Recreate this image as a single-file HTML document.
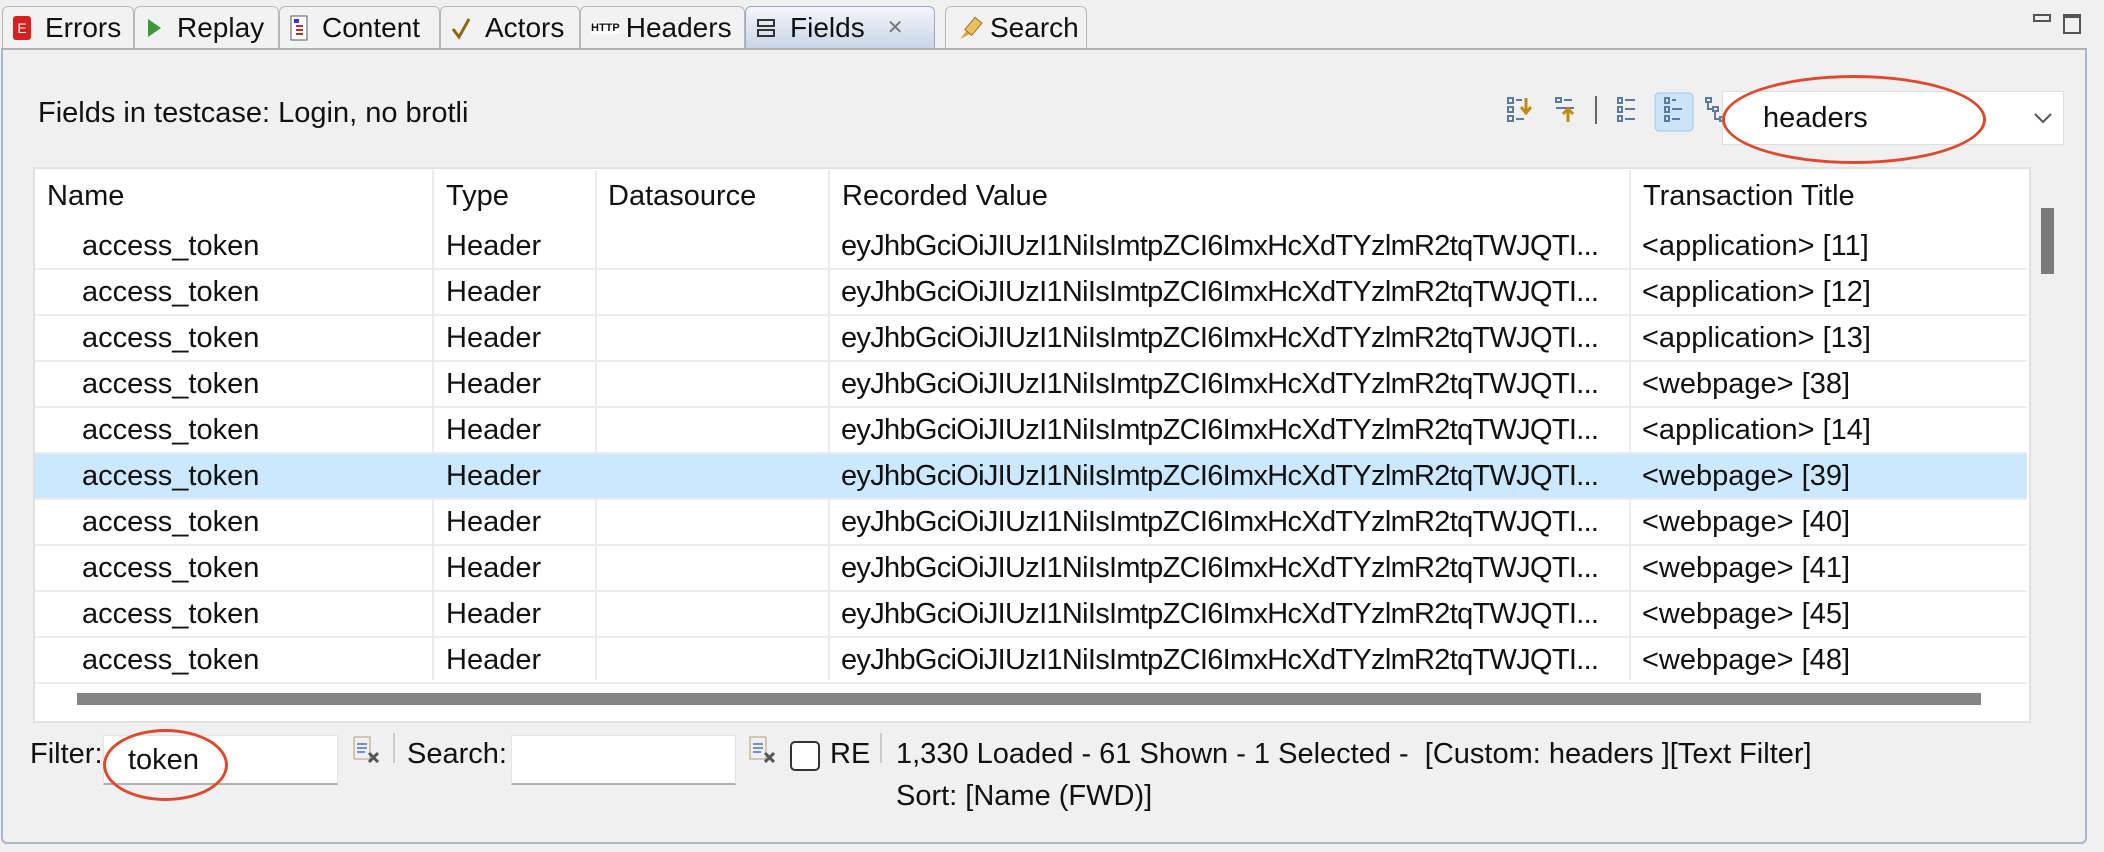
<!DOCTYPE html>
<html><head><meta charset="utf-8"><style>
*{margin:0;padding:0;box-sizing:border-box}
body{width:2104px;height:852px;background:#f0f0f0;font-family:"Liberation Sans",sans-serif;font-size:29px;color:#111;position:relative;overflow:hidden}
.a{position:absolute;white-space:nowrap}
.tab{position:absolute;top:6px;height:42px;border:1px solid #b8b8b8;border-bottom:none;border-radius:6px 6px 0 0;background:#f2f2f2;display:flex;align-items:center;padding-left:10px;gap:14px;font-size:28px}
.row{position:absolute;left:35px;width:1992px;height:46px;border-bottom:2px solid #ececec}
.row span{position:absolute;top:6px;white-space:nowrap}
.vl{position:absolute;top:170px;width:2px;height:510px;background:#ececec}
.inp{position:absolute;background:#fff;border:1px solid #e4e4e4;border-bottom:2px solid #b0b0b0}
.ell{position:absolute;border:3px solid #e2472b;border-radius:50%}
.ic{position:absolute}
</style></head><body>
<div class="tab" style="left:2px;width:132px"><span style="display:inline-block;width:18px;height:24px;background:#d62020;color:#fff;font-size:14px;text-align:center;line-height:24px;border-radius:3px">E</span>Errors</div>
<div class="tab" style="left:134px;width:145px"><svg width="18" height="22"><path d="M3 2L16 11L3 20Z" fill="#3a9a3a"/></svg>Replay</div>
<div class="tab" style="left:279px;width:161px"><svg width="18" height="26"><rect x="1" y="1" width="16" height="24" fill="#fff" stroke="#556"/><rect x="4" y="4" width="5" height="4" fill="#33f"/><path d="M6 11h7M6 15h7M6 19h7" stroke="#a33" stroke-width="2"/></svg>Content</div>
<div class="tab" style="left:440px;width:140px"><svg width="20" height="24"><path d="M2 13L8 21L18 3" fill="none" stroke="#8a6a10" stroke-width="3"/></svg>Actors</div>
<div class="tab" style="left:580px;width:165px;gap:6px"><span style="font-size:11px;font-weight:bold;background:#fff">HTTP</span>Headers</div>
<div class="tab" style="left:745px;width:190px;background:linear-gradient(#f4f6fa,#c8d6e8);border-color:#9aaac0"><svg width="20" height="22"><rect x="2" y="3" width="16" height="6" fill="none" stroke="#333" stroke-width="2"/><rect x="2" y="13" width="16" height="6" fill="none" stroke="#333" stroke-width="2"/></svg>Fields<span style="color:#777;font-size:20px;margin-left:8px">✕</span></div>
<div class="tab" style="left:945px;width:142px;gap:6px"><svg width="28" height="26"><path d="M4 24L12 14L16 18Z" fill="#d9a441"/><rect x="13" y="3" width="9" height="16" transform="rotate(40 17 11)" fill="#e8c060" stroke="#a07020"/></svg>Search</div>
<div class="a" style="left:2033px;top:14px;width:18px;height:8px;border:2px solid #555"></div>
<div class="a" style="left:2063px;top:14px;width:18px;height:20px;border:2px solid #555;border-top-width:4px"></div>
<div class="a" style="left:1px;top:48px;width:2086px;height:796px;border:2px solid #a8a8a8;border-color:#b0b0b0 #a8b8cc #a8b8cc #a8b8cc;border-radius:0 0 6px 6px"></div>
<div class="a" style="left:38px;top:97px">Fields in testcase: Login, no brotli</div>
<svg class="ic" style="left:1500px;top:92px" width="200" height="40">
<g stroke="#5a7aa0" stroke-width="2" fill="none"><rect x="8" y="6" width="5" height="5"/><rect x="8" y="15" width="5" height="5"/><rect x="8" y="24" width="5" height="5"/><path d="M16 8h6M16 27h8"/></g>
<path d="M26 6v14M21 15l5 6l5-6" stroke="#c08a10" stroke-width="3" fill="none"/>
<g stroke="#5a7aa0" stroke-width="2" fill="none"><rect x="56" y="6" width="5" height="4"/><path d="M64 8h8M56 16h18"/></g>
<path d="M68 30V18M63 22l5-5l5 5" stroke="#c08a10" stroke-width="3" fill="none"/>
<path d="M96 4v28" stroke="#666" stroke-width="2"/>
<g stroke="#5a7aa0" stroke-width="2" fill="none"><rect x="118" y="6" width="4" height="5"/><rect x="118" y="15" width="4" height="5"/><rect x="118" y="24" width="4" height="5"/><path d="M125 8h10M125 17h10M125 27h10"/></g>
<rect x="155" y="1" width="38" height="38" rx="4" fill="#cce4f7" stroke="#9ccbf0"/>
<g stroke="#5a7aa0" stroke-width="2" fill="none"><rect x="165" y="6" width="4" height="5"/><rect x="165" y="15" width="4" height="5"/><rect x="165" y="24" width="4" height="5"/><path d="M172 8h4M172 17h10M172 27h8"/></g>
</svg>
<svg class="ic" style="left:1704px;top:95px" width="26" height="34"><g stroke="#5a7aa0" stroke-width="2" fill="none"><rect x="2" y="3" width="5" height="4"/><rect x="9" y="12" width="5" height="4"/><rect x="16" y="22" width="4" height="4"/><path d="M4 7v7h5M11 16v8h5"/></g></svg>
<div class="inp" style="left:1722px;top:91px;width:342px;height:54px;border:1px solid #ddd"><span class="a" style="left:40px;top:10px;font-size:29px">headers</span><svg class="a" style="right:10px;top:19px" width="20" height="14"><path d="M2 3l8 8l8-8" stroke="#555" stroke-width="2" fill="none"/></svg></div>
<div class="ell" style="left:1722px;top:75px;width:264px;height:89px"></div>
<div class="a" style="left:33px;top:167px;width:1998px;height:556px;background:#fff;border:2px solid #e0e0e0"></div>
<div class="vl" style="left:432px"></div><div class="vl" style="left:595px"></div><div class="vl" style="left:828px"></div><div class="vl" style="left:1629px"></div>
<div class="a" style="left:47px;top:180px">Name</div>
<div class="a" style="left:446px;top:180px">Type</div>
<div class="a" style="left:608px;top:180px">Datasource</div>
<div class="a" style="left:842px;top:180px">Recorded Value</div>
<div class="a" style="left:1643px;top:180px">Transaction Title</div>
<div id="rows"></div>
<script>
var t=["&lt;application&gt; [11]","&lt;application&gt; [12]","&lt;application&gt; [13]","&lt;webpage&gt; [38]","&lt;application&gt; [14]","&lt;webpage&gt; [39]","&lt;webpage&gt; [40]","&lt;webpage&gt; [41]","&lt;webpage&gt; [45]","&lt;webpage&gt; [48]"],h="";
for(var i=0;i<10;i++){var y=224+i*46;h+='<div class="row" style="top:'+y+'px;'+(i==5?'background:#cce8ff;':'')+'"><span style="left:47px">access_token</span><span style="left:411px">Header</span><span style="left:806px;letter-spacing:-0.7px">eyJhbGciOiJIUzI1NiIsImtpZCI6ImxHcXdTYzlmR2tqTWJQTI...</span><span style="left:1607px">'+t[i]+'</span></div>';}
document.getElementById('rows').innerHTML=h;
</script>
<div class="a" style="left:2041px;top:208px;width:13px;height:66px;background:#7a7a7a"></div>
<div class="a" style="left:77px;top:693px;width:1904px;height:12px;background:#858585"></div>
<div class="a" style="left:30px;top:738px">Filter:</div>
<div class="inp" style="left:103px;top:735px;width:235px;height:50px"><span class="a" style="left:24px;top:8px">token</span></div>
<div class="ell" style="left:103px;top:729px;width:125px;height:72px"></div>
<svg class="ic" style="left:352px;top:735px" width="34" height="34"><rect x="2" y="2" width="16" height="22" fill="#eef" stroke="#b8a060"/><path d="M5 9h10M5 13h10M5 17h8" stroke="#7890c0" stroke-width="2"/><path d="M17 18l9 9M26 18l-9 9" stroke="#555" stroke-width="3"/></svg>
<div class="a" style="left:393px;top:733px;width:2px;height:30px;background:#ccc"></div>
<div class="a" style="left:407px;top:738px">Search:</div>
<div class="inp" style="left:511px;top:735px;width:225px;height:50px"></div>
<svg class="ic" style="left:748px;top:735px" width="34" height="34"><rect x="2" y="2" width="16" height="22" fill="#eef" stroke="#b8a060"/><path d="M5 9h10M5 13h10M5 17h8" stroke="#7890c0" stroke-width="2"/><path d="M17 18l9 9M26 18l-9 9" stroke="#555" stroke-width="3"/></svg>
<div class="a" style="left:790px;top:741px;width:30px;height:30px;border:2px solid #333;border-radius:5px;background:#fff"></div>
<div class="a" style="left:830px;top:738px">RE</div>
<div class="a" style="left:880px;top:733px;width:2px;height:30px;background:#ccc"></div>
<div class="a" style="left:896px;top:738px">1,330 Loaded - 61 Shown - 1 Selected - &nbsp;[Custom: headers ][Text Filter]</div>
<div class="a" style="left:896px;top:780px">Sort: [Name (FWD)]</div>
</body></html>
